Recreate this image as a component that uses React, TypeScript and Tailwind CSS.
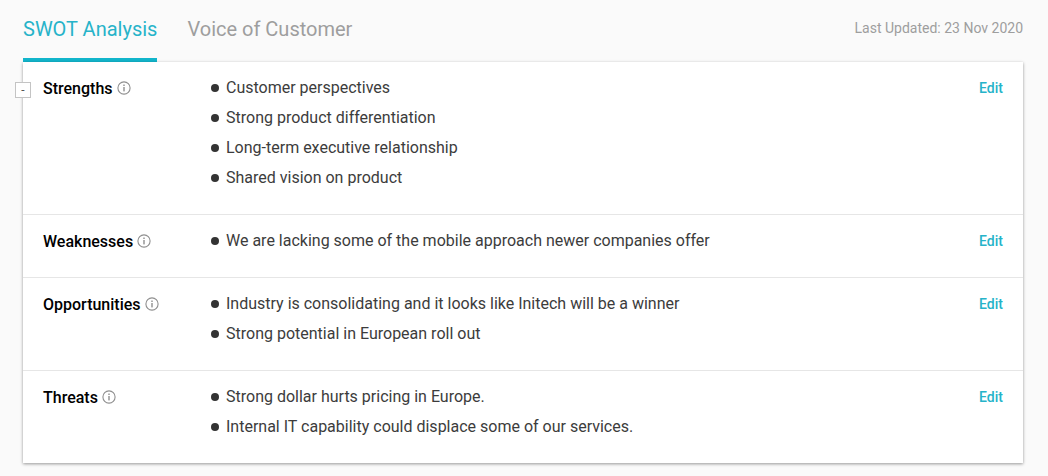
import React from "react";

const sections = [
  {
    title: "Strengths",
    items: [
      "Customer perspectives",
      "Strong product differentiation",
      "Long-term executive relationship",
      "Shared vision on product",
    ],
  },
  {
    title: "Weaknesses",
    items: ["We are lacking some of the mobile approach newer companies offer"],
  },
  {
    title: "Opportunities",
    items: [
      "Industry is consolidating and it looks like Initech will be a winner",
      "Strong potential in European roll out",
    ],
  },
  {
    title: "Threats",
    items: [
      "Strong dollar hurts pricing in Europe.",
      "Internal IT capability could displace some of our services.",
    ],
  },
];

const InfoIcon = () => (
  <svg width="14" height="14" viewBox="0 0 14 14" fill="none" className="ml-1 shrink-0 -translate-y-px">
    <circle cx="7" cy="7" r="6.1" stroke="#8f8f8f" strokeWidth="1.1" />
    <rect x="6.3" y="6" width="1.4" height="4.4" fill="#8f8f8f" />
    <rect x="6.3" y="3.5" width="1.4" height="1.5" fill="#8f8f8f" />
  </svg>
);

export default function App() {
  return (
    <div className="w-[1048px] h-[476px] bg-[#fafafa] pl-[23px] pr-[25px] font-['Roboto',sans-serif] overflow-hidden">
      {/* Tabs */}
      <div className="flex items-start justify-between h-[62px]">
        <div className="flex gap-[30px]">
          <div className="h-[62px] pt-[15px] border-b-4 border-[#12b5cb] text-[20px] leading-[28px] text-[#26b3c9]">
            SWOT Analysis
          </div>
          <div className="pt-[15px] text-[20px] leading-[28px] text-[#9e9e9e]">Voice of Customer</div>
        </div>
        <div className="pt-[18px] text-[14px] leading-[20px] text-[#9e9e9e]">Last Updated: 23 Nov 2020</div>
      </div>

      {/* Card */}
      <div className="relative bg-white shadow-[0_1px_3px_rgba(0,0,0,0.4)]">
        <button className="absolute left-[-8px] top-[20px] w-4 h-4 bg-white border border-[#c4c4c4] text-[12px] leading-[14px] text-[#555] flex items-center justify-center">
          -
        </button>
        {sections.map((s, i) => (
          <div
            key={s.title}
            className={`flex pl-5 pr-5 pt-[11px] pb-[21px] ${i < sections.length - 1 ? "border-b border-[#e6e6e6]" : ""}`}
          >
            <div className="w-[168px] h-[30px] pt-px flex items-center text-[16px] font-medium text-black">
              {s.title}
              <InfoIcon />
            </div>
            <ul className="flex-1">
              {s.items.map((item) => (
                <li key={item} className="flex items-center h-[30px] text-[16px] text-[#3c3c3c]">
                  <span className="w-2 h-2 rounded-full bg-[#333] mr-[7px]" />
                  {item}
                </li>
              ))}
            </ul>
            <a className="h-[30px] flex items-center text-[14px] font-medium text-[#26b3c9]">Edit</a>
          </div>
        ))}
      </div>
    </div>
  );
}
